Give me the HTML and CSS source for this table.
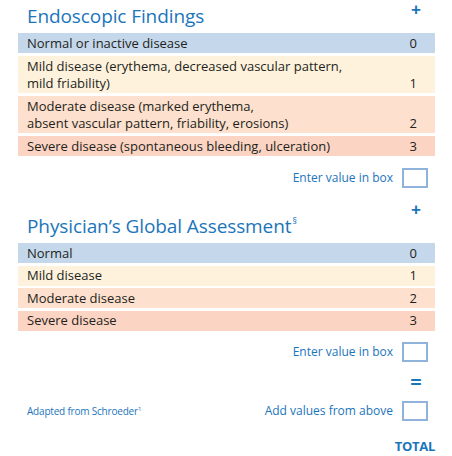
FILE: index.html
```html
<!DOCTYPE html>
<html>
<head>
<meta charset="utf-8">
<link rel="stylesheet" href="styles.css">
</head>
<body>
<div class="page">
  <div class="head head-first">
    <h2 class="title">Endoscopic Findings</h2>
    <span class="op plus">+</span>
  </div>
  <div class="rows rows-endo">
    <div class="row c0"><span>Normal or inactive disease</span><span class="num">0</span></div>
    <div class="row c1"><span>Mild disease (erythema, decreased vascular pattern,<br>mild friability)</span><span class="num">1</span></div>
    <div class="row c2"><span>Moderate disease (marked erythema,<br>absent vascular pattern, friability, erosions)</span><span class="num">2</span></div>
    <div class="row c3"><span>Severe disease (spontaneous bleeding, ulceration)</span><span class="num">3</span></div>
  </div>
  <div class="entry entry-1">
    <span class="label">Enter value in box</span><span class="box"></span>
  </div>
  <div class="head head-second">
    <h2 class="title">Physician’s Global Assessment<sup>§</sup></h2>
    <span class="op plus">+</span>
  </div>
  <div class="rows rows-pga">
    <div class="row c0"><span>Normal</span><span class="num">0</span></div>
    <div class="row c1"><span>Mild disease</span><span class="num">1</span></div>
    <div class="row c2"><span>Moderate disease</span><span class="num">2</span></div>
    <div class="row c3"><span>Severe disease</span><span class="num">3</span></div>
  </div>
  <div class="entry entry-2">
    <span class="label">Enter value in box</span><span class="box"></span>
  </div>
  <div class="equals-row"><span class="op eq">=</span></div>
  <div class="sum-row">
    <span class="source">Adapted from Schroeder<sup>1</sup></span>
    <div class="entry-inline">
      <span class="label">Add values from above</span><span class="box"></span>
    </div>
  </div>
  <div class="total-row"><span class="total">TOTAL</span></div>
</div>
</body>
</html>
```

FILE: styles.css
```css
* { box-sizing: border-box; }
html, body { margin: 0; padding: 0; background: #ffffff; }
body {
  font-family: "Open Sans", "Noto Sans", sans-serif;
  color: #231f20;
}
.page {
  width: 452px;
  padding: 0 17px 0 18px;
}
.head {
  display: flex;
  justify-content: space-between;
  align-items: flex-start;
}
.head-first { height: 33px; }
.head-second { height: 55px; }
.title {
  margin: 0;
  align-self: flex-end;
  padding: 0 0 5px 9px;
  font-size: 19px;
  line-height: 24px;
  font-weight: 400;
  color: #1b75bb;
  letter-spacing: -0.1px;
}
.title sup {
  font-size: 8.5px;
  vertical-align: 9px;
  margin-left: 1px;
}
.op {
  color: #1b75bb;
  font-weight: 700;
  width: 22px;
  text-align: center;
  margin-right: 8px;
}
.plus {
  font-family: "Liberation Sans", Arial, sans-serif;
  font-size: 17px;
  line-height: normal;
  margin-top: 0;
}
.head-second .plus { margin-top: 12px; }
.rows {
  display: flex;
  flex-direction: column;
  gap: 3px;
}
.rows-pga { gap: 2.6px; }
.row {
  display: flex;
  justify-content: space-between;
  align-items: flex-end;
  padding: 1.5px 18px 1.5px 9px;
  font-size: 13px;
  line-height: 17px;
}
.num { text-align: right; }
.c0 { background: #c5d7eb; }
.c1 { background: #fef2dd; }
.c2 { background: #fde0cd; }
.c3 { background: #fcd4c3; }
.entry {
  display: flex;
  justify-content: flex-end;
  align-items: center;
  gap: 9px;
  padding-right: 7px;
}
.entry-1 { margin-top: 12px; }
.entry-2 { margin-top: 11px; }
.label {
  color: #1b75bb;
  font-size: 12px;
  line-height: 16px;
}
.box {
  width: 26px;
  height: 20px;
  border: 2px solid #8fb3db;
  background: #fff;
}
.equals-row {
  display: flex;
  justify-content: flex-end;
  margin-top: 8px;
}
.eq {
  font-size: 20px;
  line-height: 24px;
}
.sum-row {
  display: flex;
  justify-content: space-between;
  align-items: center;
  margin-top: 7px;
}
.source {
  color: #1b75bb;
  font-size: 10px;
  padding-left: 9px;
  letter-spacing: -0.2px;
}
.source sup { font-size: 6px; vertical-align: 4px; }
.entry-inline {
  display: flex;
  align-items: center;
  gap: 9px;
  padding-right: 7px;
}
.total-row {
  display: flex;
  justify-content: flex-end;
  margin-top: 17px;
}
.total {
  color: #1b75bb;
  font-weight: 700;
  font-size: 13px;
  line-height: 16px;
  letter-spacing: -0.3px;
}
```
